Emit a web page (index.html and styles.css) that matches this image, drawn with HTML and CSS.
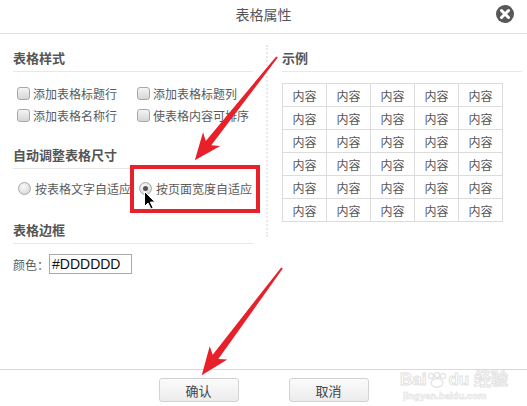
FILE: index.html
```html
<!doctype html>
<html>
  <head>
    <meta charset="utf-8">
    <title>表格属性</title>
    <link rel="stylesheet" href="styles.css">
  </head>
  <body>
    <div class="dialog">
      <div class="header">
        <span></span>
        <span class="title">表格属性</span>
        <span class="close">
          <svg width="18" height="18" viewBox="0 0 18 18">
            <circle cx="9" cy="9" r="9" fill="#585858"/>
            <path d="M5.5 5.5 L12.5 12.5 M12.5 5.5 L5.5 12.5" stroke="#fff" stroke-width="3" stroke-linecap="round"/>
          </svg>
        </span>
      </div>

      <div class="main">
        <div class="left">
          <div class="heading">表格样式</div>
          <div class="checks">
            <label class="opt"><span class="box"></span>添加表格标题行</label>
            <label class="opt"><span class="box"></span>添加表格标题列</label>
            <label class="opt"><span class="box"></span>添加表格名称行</label>
            <label class="opt"><span class="box"></span>使表格内容可排序</label>
          </div>

          <div class="heading heading-gap">自动调整表格尺寸</div>
          <div class="radios">
            <label class="opt"><span class="radio"></span>按表格文字自适应</label>
            <label class="opt"><span class="radio on"></span>按页面宽度自适应</label>
          </div>

          <div class="heading heading-gap2">表格边框</div>
          <div class="color-row">
            <span class="color-label">颜色：</span>
            <span class="color-input">#DDDDDD</span>
          </div>
        </div>

        <div class="sep"></div>

        <div class="right">
          <div class="heading">示例</div>
          <table class="sample">
            <tr><td>内容</td><td>内容</td><td>内容</td><td>内容</td><td>内容</td></tr>
            <tr><td>内容</td><td>内容</td><td>内容</td><td>内容</td><td>内容</td></tr>
            <tr><td>内容</td><td>内容</td><td>内容</td><td>内容</td><td>内容</td></tr>
            <tr><td>内容</td><td>内容</td><td>内容</td><td>内容</td><td>内容</td></tr>
            <tr><td>内容</td><td>内容</td><td>内容</td><td>内容</td><td>内容</td></tr>
            <tr><td>内容</td><td>内容</td><td>内容</td><td>内容</td><td>内容</td></tr>
          </table>
        </div>
      </div>

      <div class="footer">
        <button class="btn">确认</button>
        <button class="btn">取消</button>
      </div>
    </div>

    <!-- watermark -->
    <div class="watermark">
      <div class="wm-top">Bai<svg width="22" height="16" viewBox="0 0 22 16"><g fill="#fff" stroke="#e2e2e2" stroke-width="1.2"><circle cx="5" cy="4" r="2.6"/><circle cx="11" cy="3" r="2.6"/><circle cx="17" cy="4" r="2.6"/><ellipse cx="11" cy="11" rx="6" ry="4.3"/></g></svg>du 经验</div>
      <div class="wm-bottom">jingyan.baidu.com</div>
    </div>

    <!-- annotations -->
    <svg class="marks" width="527" height="406" viewBox="0 0 527 406">
      <rect x="132" y="167" width="126" height="44" fill="none" stroke="#e8202a" stroke-width="4"/>
      <g transform="translate(277 57) rotate(128.5)">
        <polygon fill="#e8202a" points="0,-1 110,-3.5 105,-11 132,0 105,11 110,3.5 0,1"/>
      </g>
      <g transform="translate(282 268) rotate(126.8)">
        <polygon fill="#e8202a" points="0,-1 111,-3.5 106,-11 134,0 106,11 111,3.5 0,1"/>
      </g>
      <path transform="translate(144.5 191.5)" d="M0 0 L0 15 L3.5 11.5 L6.5 17.5 L8.7 16.5 L5.8 10.6 L10.5 10.6 Z" fill="#000" stroke="#fff" stroke-width="1"/>
    </svg>
  </body>
</html>
```

FILE: styles.css
```css
html, body {
  margin: 0;
  padding: 0;
  background: #fff;
}
body {
  width: 527px;
  height: 406px;
  overflow: hidden;
  position: relative;
  font-family: "Noto Sans CJK SC", "Noto Sans", sans-serif;
  font-size: 12px;
  color: #5a5a5a;
}
.dialog {
  display: flex;
  flex-direction: column;
  height: 406px;
}

/* header */
.header {
  display: grid;
  grid-template-columns: 1fr auto 1fr;
  height: 33px;
  border-bottom: 1px solid #e2e2e2;
}
.title {
  font-size: 14px;
  line-height: 28px;
  color: #555;
}
.close {
  justify-self: end;
  margin: 5px 13px 0 0;
  height: 18px;
}

/* body */
.main {
  display: flex;
  height: 335px;
}
.left {
  width: 240px;
  padding: 16px 0 0 13px;
}
.sep {
  margin: 11px 0 0 13px;
  height: 192px;
  border-left: 2px dotted #e8e8e8;
}
.right {
  width: 240px;
  margin-left: 14px;
  padding-top: 16px;
}
.heading {
  font-size: 13px;
  font-weight: bold;
  line-height: 16px;
  padding-bottom: 5px;
  border-bottom: 1px solid #e8e8e8;
  color: #555;
}
.heading-gap {
  margin-top: 21px;
}
.heading-gap2 {
  margin-top: 24px;
}

.checks {
  display: grid;
  grid-template-columns: 120px 120px;
  margin-top: 10px;
}
.opt {
  display: flex;
  align-items: center;
  height: 22px;
  white-space: nowrap;
}
.checks .opt {
  padding-left: 4px;
}
.box {
  width: 11px;
  height: 11px;
  margin-right: 3px;
  border: 1px solid #a8a8a8;
  border-radius: 3px;
  background: linear-gradient(#f4f4f4, #d6d6d6);
}

.radios {
  display: flex;
  margin-top: 9px;
}
.radios .opt {
  height: 20px;
  margin-left: 5px;
}
.radios .opt + .opt {
  margin-left: 8px;
}
.radio {
  width: 11px;
  height: 11px;
  margin-right: 4px;
  border: 1px solid #a8a8a8;
  border-radius: 50%;
  background: radial-gradient(circle at 40% 35%, #fafafa, #cfcfcf);
  position: relative;
}
.radio.on::after {
  content: "";
  position: absolute;
  left: 3px;
  top: 3px;
  width: 5px;
  height: 5px;
  border-radius: 50%;
  background: #555;
}

.color-row {
  display: flex;
  align-items: center;
  margin-top: 10px;
}
.color-input {
  box-sizing: border-box;
  width: 83px;
  height: 20px;
  padding-left: 2px;
  border: 1px solid #a9a9a9;
  font-family: "Liberation Sans", Arial, sans-serif;
  font-size: 14px;
  line-height: 18px;
  color: #111;
}

.sample {
  margin-top: 11px;
  border-collapse: collapse;
}
.sample td {
  width: 43px;
  height: 22px;
  padding: 0;
  border: 1px solid #dcdcdc;
  text-align: center;
  font-size: 12px;
  color: #555;
}

/* footer */
.footer {
  display: flex;
  justify-content: center;
  gap: 50px;
  flex: 1;
  padding-top: 8px;
  border-top: 1px solid #dadada;
}
.btn {
  width: 80px;
  height: 24px;
  padding: 0;
  border: 1px solid #d2d2d2;
  border-radius: 3px;
  background: linear-gradient(#fbfbfb, #ececec);
  font-family: "Noto Sans CJK SC", sans-serif;
  font-size: 13px;
  font-weight: normal;
  color: #444;
}

.watermark {
  position: absolute;
  left: 400px;
  top: 370px;
  color: #fff;
  -webkit-text-stroke: 1px #e2e2e2;
  font-family: "Liberation Sans", "Noto Sans CJK SC", sans-serif;
  font-weight: bold;
}
.wm-top {
  display: flex;
  align-items: center;
  font-size: 17px;
  line-height: 20px;
}
.wm-bottom {
  font-size: 9.5px;
  line-height: 12px;
  padding-left: 3px;
  -webkit-text-stroke: 0.6px #e2e2e2;
}

.marks {
  position: absolute;
  left: 0;
  top: 0;
  pointer-events: none;
}
```
